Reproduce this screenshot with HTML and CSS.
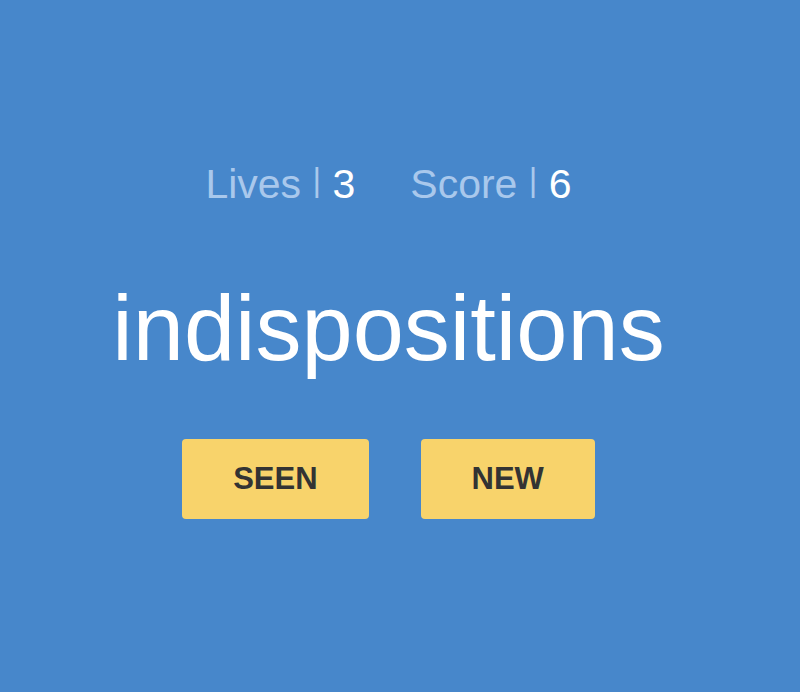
FILE: index.html
```html
<!DOCTYPE html>
<html lang="en">

<head>
  <meta charset="UTF-8" />
  <meta name="viewport" content="width=device-width, initial-scale=1.0" />
  <title>Vocabulary Memory</title>
  <link rel="stylesheet" href="styles.css">
</head>

<body>
  <div class="game">
    <div class="stats">
      <span class="stat">Lives <span class="sep">|</span> <span class="value">3</span></span>
      <span class="stat">Score <span class="sep">|</span> <span class="value">6</span></span>
    </div>

    <div class="word">indispositions</div>

    <div class="actions">
      <button class="btn btn-seen">SEEN</button>
      <button class="btn btn-new">NEW</button>
    </div>
  </div>
</body>

</html>
```

FILE: styles.css
```css
html,
body {
  margin: 0;
  height: 100%;
}

body {
  background-color: #4787cb;
  font-family: "Liberation Sans", Arial, sans-serif;
  color: #fff;
  overflow: hidden;
}

.game {
  width: 777px;
  padding-top: 160px;
  display: flex;
  flex-direction: column;
  align-items: center;
}

.stats {
  display: flex;
  gap: 55px;
  font-size: 41px;
  line-height: 48px;
  color: #a9c8ec;
}

/* keep the bar sitting on the baseline like a capital */
.sep {
  font-size: 33px;
  line-height: 0;
  vertical-align: 7px;
}

.value {
  color: #fff;
}

.word {
  margin-top: 70px;
  font-size: 92px;
  line-height: 100px;
  color: #fff;
}

.actions {
  margin-top: 61px;
  display: flex;
  gap: 52px;
}

.btn {
  height: 80px;
  padding: 0 51px;
  border: none;
  border-radius: 4px;
  background-color: #f8d36b;
  color: #333;
  font-family: "Liberation Sans", Arial, sans-serif;
  font-size: 31px;
  font-weight: bold;
  cursor: pointer;
}
```
